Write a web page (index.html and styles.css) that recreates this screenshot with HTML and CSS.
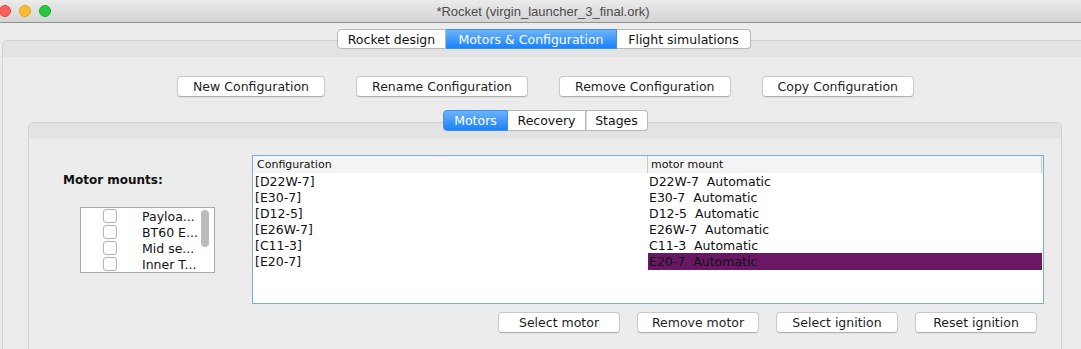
FILE: index.html
```html
<!DOCTYPE html>
<html lang="en">
<head>
  <meta charset="UTF-8">
  <title>*Rocket (virgin_launcher_3_final.ork)</title>
  <link rel="stylesheet" href="styles.css">
</head>
<body>
  <div class="window">
    <div class="titlebar">
      <div class="lights">
        <span class="light red"></span>
        <span class="light yellow"></span>
        <span class="light green"></span>
      </div>
      <div class="title">*Rocket (virgin_launcher_3_final.ork)</div>
      <div></div>
    </div>

    <div class="main">
      <div class="tabs tabs-top">
        <span class="tab">Rocket design</span>
        <span class="tab active">Motors &amp; Configuration</span>
        <span class="tab">Flight simulations</span>
      </div>

      <div class="pane pane-outer">
        <div class="config-buttons">
          <button class="button">New Configuration</button>
          <button class="button">Rename Configuration</button>
          <button class="button">Remove Configuration</button>
          <button class="button">Copy Configuration</button>
        </div>

        <div class="tabs tabs-inner">
          <span class="tab active">Motors</span>
          <span class="tab">Recovery</span>
          <span class="tab">Stages</span>
        </div>

        <div class="pane pane-inner">
          <div class="mounts">
            <div class="mounts-label">Motor mounts:</div>
            <div class="mount-list">
              <div class="mount-rows">
                <div class="mount"><span class="check"></span>Payloa...</div>
                <div class="mount"><span class="check"></span>BT60 E...</div>
                <div class="mount"><span class="check"></span>Mid se...</div>
                <div class="mount"><span class="check"></span>Inner T...</div>
              </div>
              <div class="scrollbar"><div class="thumb"></div></div>
            </div>
          </div>

          <div class="motors">
            <div class="table">
              <div class="row head">
                <div class="cell">Configuration</div>
                <div class="cell">motor mount</div>
              </div>
              <div class="row"><div class="cell">[D22W-7]</div><div class="cell">D22W-7  Automatic</div></div>
              <div class="row"><div class="cell">[E30-7]</div><div class="cell">E30-7  Automatic</div></div>
              <div class="row"><div class="cell">[D12-5]</div><div class="cell">D12-5  Automatic</div></div>
              <div class="row"><div class="cell">[E26W-7]</div><div class="cell">E26W-7  Automatic</div></div>
              <div class="row"><div class="cell">[C11-3]</div><div class="cell">C11-3  Automatic</div></div>
              <div class="row"><div class="cell">[E20-7]</div><div class="cell selected">E20-7  Automatic</div></div>
            </div>
            <div class="motor-buttons">
              <button class="button wide">Select motor</button>
              <button class="button wide">Remove motor</button>
              <button class="button wide">Select ignition</button>
              <button class="button wide">Reset ignition</button>
            </div>
          </div>
        </div>
      </div>
    </div>
  </div>
</body>
</html>
```

FILE: styles.css
```css
body{
  margin: 0;
  background-color: #ececec;
  font-family: "DejaVu Sans", sans-serif;
  font-size: 12.5px;
  color: #1d1d1d;
  overflow: hidden;
}
.window{
  width: 1081px;
  height: 349px;
  overflow: hidden;
}

/* title bar */
.titlebar{
  height: 22px;
  display: grid;
  grid-template-columns: 1fr auto 1fr;
  align-items: center;
  background: linear-gradient(#ebebeb, #d4d4d4);
  border-bottom: 1px solid #8f8f8f;
}
.lights{
  display: flex;
  gap: 8px;
  margin-left: -1px;
}
.light{
  width: 12px;
  height: 12px;
  border-radius: 50%;
  box-sizing: border-box;
}
.light.red{
  background-color: #fe5f57;
  border: 1px solid #e2463f;
}
.light.yellow{
  background-color: #febc2e;
  border: 1px solid #e1a116;
}
.light.green{
  background-color: #28c840;
  border: 1px solid #1aab29;
}
.title{
  font-family: "Liberation Sans", sans-serif;
  font-size: 13px;
  color: #4a4a4a;
  padding-left: 5px;
}

/* main area */
.main{
  width: 1087px;
  padding: 6px 0 0 2px;
}

/* segmented tabs */
.tabs{
  display: flex;
  justify-content: center;
  position: relative;
  z-index: 1;
}
.tabs .tab{
  display: flex;
  justify-content: center;
  align-items: center;
  box-sizing: border-box;
  background-color: #fff;
  border: 1px solid #b8b8b8;
  border-left: none;
  color: #111;
  white-space: nowrap;
}
.tabs .tab:first-child{
  border-left: 1px solid #b8b8b8;
  border-radius: 4px 0 0 4px;
}
.tabs .tab:last-child{
  border-radius: 0 4px 4px 0;
}
.tabs .tab + .tab{
  box-shadow: inset 1px 0 0 #d6d6d6;
}
.tabs .tab.active{
  background: linear-gradient(#6cb3fa, #1a82fb);
  border-color: #3d8ef0;
  color: #fff;
  box-shadow: none;
}
.tabs .tab.active + .tab{
  box-shadow: none;
}
.tabs-top{
  height: 20px;
  margin-bottom: -9px;
  padding-right: 3px;
}
.tabs-top .tab{
  height: 20px;
}
.tabs-top .tab:nth-child(1){ width: 109px; }
.tabs-top .tab:nth-child(2){ width: 171px; }
.tabs-top .tab:nth-child(3){ width: 134px; }

.tabs-inner{
  height: 21px;
  margin-top: 13px;
  margin-bottom: -9px;
}
.tabs-inner .tab{
  height: 21px;
}
.tabs-inner .tab:nth-child(1){ width: 65px; }
.tabs-inner .tab:nth-child(2){ width: 78px; }
.tabs-inner .tab:nth-child(3){ width: 62px; }

/* panes */
.pane{
  border: 1px solid #d2d2d2;
  border-radius: 5px;
  background: linear-gradient(#e3e3e3 16px, #ececec 16px);
}
.pane-outer{
  height: 400px;
  padding-top: 35px;
}
.pane-inner{
  margin: 0 26px 0 25px;
  height: 300px;
  padding-top: 32px;
  display: flex;
}

/* buttons */
.button{
  height: 21px;
  padding: 0 15px;
  box-sizing: border-box;
  font-family: "DejaVu Sans", sans-serif;
  font-size: 12.5px;
  color: #1d1d1d;
  background-color: #fff;
  border: 1px solid #c9c9c9;
  border-bottom-color: #b0b0b0;
  border-radius: 4px;
  box-shadow: 0 1px 1px rgba(0, 0, 0, 0.05);
  outline: none;
}
.button.wide{
  width: 122px;
  padding: 0;
}
.config-buttons{
  display: flex;
  justify-content: center;
  gap: 31px;
}

/* motor mounts */
.mounts{
  width: 223px;
  flex-shrink: 0;
}
.mounts-label{
  margin: 17px 0 0 34px;
  line-height: 16px;
  font-size: 12px;
  font-weight: bold;
  color: #111;
}
.mount-list{
  margin: 19px 0 0 51px;
  width: 135px;
  height: 66px;
  box-sizing: border-box;
  border: 1px solid #a9a9a9;
  background-color: #fff;
  display: flex;
}
.mount-rows{
  flex: 1;
}
.mount{
  display: flex;
  align-items: center;
  height: 16px;
  padding-left: 22px;
  white-space: nowrap;
  color: #111;
}
.check{
  width: 14px;
  height: 14px;
  box-sizing: border-box;
  border: 1px solid #b3b3b3;
  border-radius: 3px;
  background-color: #fff;
  margin-right: 25px;
}
.scrollbar{
  width: 13px;
  padding-top: 2px;
}
.thumb{
  width: 8px;
  height: 37px;
  border-radius: 4px;
  background-color: #bcbcbc;
}

/* motor table */
.motors{
  width: 792px;
}
.table{
  height: 149px;
  box-sizing: border-box;
  border: 1px solid #80aadc;
  background-color: #fff;
}
.row{
  display: grid;
  grid-template-columns: 395px 394px;
  height: 16px;
  line-height: 17px;
}
.row .cell{
  padding-left: 2px;
  white-space: pre;
  color: #111;
}
.row .cell + .cell{
  padding-left: 1px;
}
.row.head{
  height: 17px;
  line-height: 17px;
  background-color: #f4f4f4;
  font-size: 11px;
}
.row.head .cell{
  padding-left: 4px;
  box-shadow: inset -1px 0 0 #cacaca;
}
.row.head .cell + .cell{
  padding-left: 3px;
}
.row .cell.selected{
  background-color: #6a1866;
}
.motor-buttons{
  display: flex;
  justify-content: flex-end;
  gap: 17px;
  margin-top: 8px;
  padding-right: 7px;
}
```
